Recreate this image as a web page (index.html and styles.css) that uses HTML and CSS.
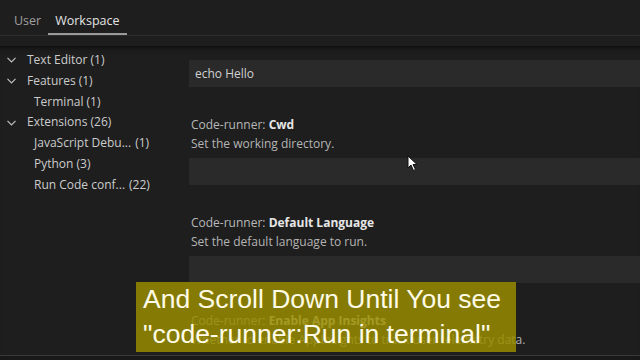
FILE: index.html
```html
<!DOCTYPE html>
<html lang="en">
<head>
    <meta charset="UTF-8">
    <title>Settings</title>
    <link rel="stylesheet" href="styles.css">
</head>
<body>
    <div class="tabs">
        <span class="tab">User</span><span class="tab on">Workspace</span>
    </div>
    <div class="main">
        <div class="tree">
            <div class="row"><svg class="chev" width="9" height="6" viewBox="0 0 9 6"><polyline points="0.5,0.8 4.5,4.8 8.5,0.8"/></svg>Text Editor (1)</div>
            <div class="row"><svg class="chev" width="9" height="6" viewBox="0 0 9 6"><polyline points="0.5,0.8 4.5,4.8 8.5,0.8"/></svg>Features (1)</div>
            <div class="row sub">Terminal (1)</div>
            <div class="row"><svg class="chev" width="9" height="6" viewBox="0 0 9 6"><polyline points="0.5,0.8 4.5,4.8 8.5,0.8"/></svg>Extensions (26)</div>
            <div class="row sub">JavaScript Debu... <span class="num">(1)</span></div>
            <div class="row sub">Python (3)</div>
            <div class="row sub">Run Code conf... <span class="num">(22)</span></div>
        </div>
        <div class="settings">
            <div class="input">echo Hello</div>
            <div class="item">
                <div class="title">Code-runner: <b>Cwd</b></div>
                <div class="desc">Set the working directory.</div>
                <div class="input"></div>
            </div>
            <div class="item">
                <div class="title">Code-runner: <b>Default Language</b></div>
                <div class="desc">Set the default language to run.</div>
                <div class="input"></div>
            </div>
            <div class="item">
                <div class="title">Code-runner: <b>Enable App Insights</b></div>
                <div class="desc">Whether to enable AppInsights to track user telemetry data.</div>
            </div>
        </div>
    </div>
    <div class="foot"></div>

    <svg class="pointer" width="11" height="17" viewBox="0 0 11 17"><path d="M1 1 L1 13 L4 10 L6.5 15.5 L8.5 14.5 L6 9.5 L10 9.5 Z"/></svg>

    <div class="caption">And Scroll Down Until You see<br>"code-runner:Run in terminal"</div>
</body>
</html>
```
FILE: styles.css
```css
* { margin: 0; padding: 0; box-sizing: border-box; }
body { width: 640px; height: 360px; overflow: hidden; position: relative; background: #1e1e1e; color: #cccccc; font-family: "Open Sans", "Noto Sans", sans-serif; font-size: 12px; display: flex; flex-direction: column; }

.tabs { height: 36px; border-bottom: 1px solid #2e2e2e; padding-left: 7px; display: flex; flex-shrink: 0; }
.tab { padding: 11px 7px 0 7px; line-height: 19px; height: 35px; color: #a0a0a0; font-size: 12.5px; }
.tab.on { color: #e4e4e4; border-bottom: 2px solid #9a9a9a; }

.main { flex: 1; display: flex; margin-top: 10px; box-shadow: inset 0 6px 6px -6px #000; overflow: hidden; }
.tree { width: 189px; flex-shrink: 0; padding-top: 4px; }
.row { height: 20.8px; line-height: 20.8px; padding-left: 7px; display: flex; align-items: center; white-space: nowrap; }
.row.sub { padding-left: 34px; }
.chev { fill: none; stroke: #c0c0c0; stroke-width: 1.2; margin-right: 11px; }
.num { margin-left: 4px; }

.settings { flex: 1; padding-top: 14px; }
.input { height: 27px; line-height: 27px; background: #2a2a2a; padding-left: 6px; color: #d0d0d0; }
.item { margin-top: 28px; padding-left: 2px; }
.title { line-height: 19px; color: #b8b8b8; }
.title b { color: #e6e6e6; font-weight: 700; }
.desc { line-height: 19px; color: #b4b4b4; margin-bottom: 5px; }
.item .input { margin-left: -2px; }

.foot { height: 5px; flex-shrink: 0; border-top: 1px solid #3a3a3a; background: #191919; }

.pointer { position: absolute; left: 407px; top: 155px; fill: #ffffff; stroke: #111; stroke-width: 1; }

.caption { position: absolute; left: 136px; top: 282px; width: 380px; height: 70px; padding-left: 7px; background: rgba(152, 140, 0, 0.85); color: #fffbe6; font-family: "Liberation Sans", Arial, sans-serif; font-size: 26.5px; line-height: 35px; white-space: nowrap; }
```
